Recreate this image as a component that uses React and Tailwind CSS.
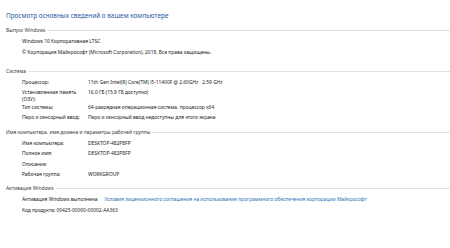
import React from "react";

const FONT = { fontFamily: '"Noto Sans", "Open Sans", sans-serif' };

const SectionHeader = ({ title, className = "" }) => (
    <div className={`flex items-center h-[7px] ${className}`}>
        <span className="text-[4.9px] leading-[7px] text-[#3c3c3c] whitespace-nowrap">{title}</span>
        <div className="flex-1 h-px bg-[#e2e2e2] ml-[2px]" />
    </div>
);

const InfoRow = ({ label, value, className = "", tall = false }) => (
    <div className={`grid grid-cols-[66px_1fr] pl-[16px] text-[4.9px] leading-[7px] text-[#1a1a1a] ${tall ? "h-[14px]" : "h-[7px]"} ${className}`}>
        <span className="whitespace-pre-line">{label}</span>
        <span className="whitespace-pre">{value}</span>
    </div>
);

export default function App() {
    return (
        <div className="w-[450px] h-[248px] bg-white overflow-hidden flex flex-col pt-[11px] pl-[6px]" style={FONT}>
            <h1 className="h-[10px] text-[6.4px] leading-[10px] text-[#2858a6] whitespace-nowrap">
                Просмотр основных сведений о вашем компьютере
            </h1>

            <SectionHeader title="Выпуск Windows" className="mt-[6px]" />
            <div className="pl-[16px] text-[4.9px] leading-[7px] text-[#1a1a1a]">
                <div className="mt-[4px] h-[7px]">Windows 10 Корпоративная LTSC</div>
                <div className="mt-[4px] h-[7px] whitespace-nowrap">
                    © Корпорация Майкрософт (Microsoft Corporation), 2018. Все права защищены.
                </div>
            </div>

            <SectionHeader title="Система" className="mt-[12px]" />
            <InfoRow className="mt-[4px]" label="Процессор:" value="11th Gen Intel(R) Core(TM) i5-11400F @ 2.60GHz   2.59 GHz" />
            <InfoRow className="mt-[3px]" tall label={"Установленная память\n(ОЗУ):"} value="16,0 ГБ (15,9 ГБ доступно)" />
            <InfoRow className="mt-[1px]" label="Тип системы:" value="64-разрядная операционная система, процессор x64" />
            <InfoRow className="mt-[3px]" label="Перо и сенсорный ввод:" value="Перо и сенсорный ввод недоступны для этого экрана" />

            <SectionHeader title="Имя компьютера, имя домена и параметры рабочей группы" className="mt-[8px]" />
            <InfoRow className="mt-[4px]" label="Имя компьютера:" value="DESKTOP-482P8FP" />
            <InfoRow className="mt-[3px]" label="Полное имя:" value="DESKTOP-482P8FP" />
            <InfoRow className="mt-[4px]" label="Описание:" value="" />
            <InfoRow className="mt-[3px]" label="Рабочая группа:" value="WORKGROUP" />

            <SectionHeader title="Активация Windows" className="mt-[7px]" />
            <div className="pl-[16px] text-[4.9px] leading-[7px] text-[#1a1a1a]">
                <div className="mt-[4px] h-[7px] flex whitespace-nowrap">
                    <span>Активация Windows выполнена</span>
                    <span className="ml-[7px] text-[#2a72b8]">
                        Условия лицензионного соглашения на использование программного обеспечения корпорации Майкрософт
                    </span>
                </div>
                <div className="mt-[4px] h-[7px] whitespace-nowrap">Код продукта: 00425-00000-00002-AA363</div>
            </div>
        </div>
    );
}
